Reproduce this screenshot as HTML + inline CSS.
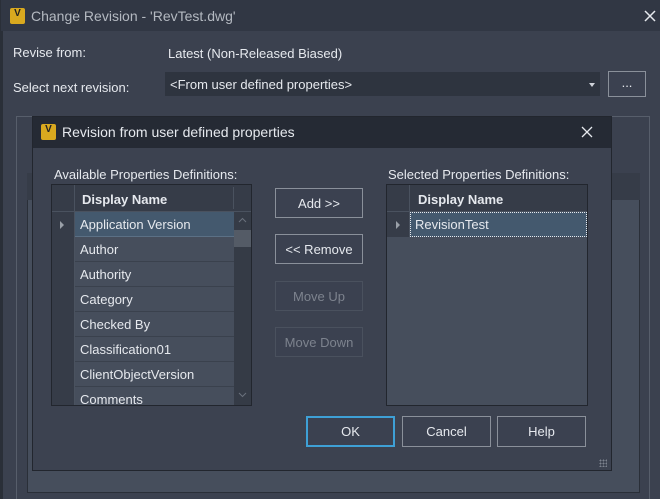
<!DOCTYPE html>
<html><head><style>
*{margin:0;padding:0;box-sizing:border-box}
body{width:660px;height:499px;overflow:hidden;background:#3b414f;font-family:"Liberation Sans",sans-serif;font-size:13px;color:#e6e9ee;position:relative}
.a{position:absolute}
.btn{position:absolute;border:1px solid #8a909a;text-align:center;color:#e6e9ee;background:#3b4150}
.dis{border-color:#4a515e;color:#7d838e}
.row{position:absolute;left:23px;width:159px;height:25px;border-bottom:1px solid #3a414d;padding-left:5px;line-height:25px;background:#464e5c}
.icon{position:absolute;width:15px;height:16px;background:#d9a91f;border-radius:2px;color:#222;font-weight:bold;font-size:10px;text-align:center;line-height:11px}
</style></head><body>
<div class="a" style="left:0;top:0;width:3px;height:499px;background:#2a2f38"></div>
<div class="a" style="left:1px;top:0;width:659px;height:31px;background:#313744"></div>
<div class="icon" style="left:10px;top:8px">V</div>
<div class="a" style="left:31px;top:8px;font-size:14px;color:#b4b9c1">Change Revision - 'RevTest.dwg'</div>
<svg class="a" style="left:644px;top:10px" width="12" height="12"><path d="M1 1L11 11M11 1L1 11" stroke="#e6e9ee" stroke-width="1.5"/></svg>
<div class="a" style="left:13px;top:45px">Revise from:</div>
<div class="a" style="left:168px;top:46px">Latest (Non-Released Biased)</div>
<div class="a" style="left:13px;top:80px">Select next revision:</div>
<div class="a" style="left:165px;top:72px;width:435px;height:24px;background:#2e343f;padding-left:5px;line-height:25px">&lt;From user defined properties&gt;</div>
<div class="a" style="left:589px;top:83px;border:3px solid transparent;border-top:4px solid #cfd3d9"></div>
<div class="btn" style="left:608px;top:71px;width:38px;height:26px;line-height:22px">...</div>
<div class="a" style="left:16px;top:116px;width:634px;height:383px;border:1px solid #575e6b;border-bottom:none;background:#3b414f"></div>
<div class="a" style="left:27px;top:173px;width:613px;height:320px;border:1px solid #2a2f38;background:#464e5c"></div>
<div class="a" style="left:27px;top:173px;width:613px;height:27px;background:#363c48"></div>
<div class="a" style="left:32px;top:116px;width:580px;height:355px;border:1px solid #22262e;background:#3c4250">
 <div class="a" style="left:0;top:0;width:578px;height:31px;background:#252a34"></div>
 <div class="icon" style="left:8px;top:7px">V</div>
 <div class="a" style="left:29px;top:7px;font-size:14px">Revision from user defined properties</div>
 <svg class="a" style="left:548px;top:9px" width="12" height="12"><path d="M1 1L11 11M11 1L1 11" stroke="#e6e9ee" stroke-width="1.3"/></svg>
 <div class="a" style="left:21px;top:50px">Available Properties Definitions:</div>
 <div class="a" style="left:355px;top:50px">Selected Properties Definitions:</div>
 <div class="a" style="left:18px;top:67px;width:201px;height:222px;border:1px solid #22262e;background:#363c48;overflow:hidden">
  <div class="a" style="left:0;top:0;width:199px;height:27px;border-bottom:1px solid #4a525f"></div>
  <div class="a" style="left:22px;top:0;width:1px;height:220px;background:#4a525f"></div>
  <div class="a" style="left:181px;top:2px;width:1px;height:22px;background:#4a525f"></div>
  <div class="a" style="left:30px;top:7px;font-weight:bold">Display Name</div>
  <div class="a" style="left:8px;top:36px;border:4px solid transparent;border-left:4px solid #9aa0a8;border-right:none"></div>
  <div class="row" style="top:27px;background:#44596e;border-bottom:1px solid #5b7085">Application Version</div>
  <div class="row" style="top:52px">Author</div>
  <div class="row" style="top:77px">Authority</div>
  <div class="row" style="top:102px">Category</div>
  <div class="row" style="top:127px">Checked By</div>
  <div class="row" style="top:152px">Classification01</div>
  <div class="row" style="top:177px">ClientObjectVersion</div>
  <div class="row" style="top:202px">Comments</div>
  <div class="a" style="left:182px;top:27px;width:17px;height:193px;background:#353b46"></div>
  <div class="a" style="left:182px;top:45px;width:17px;height:17px;background:#545b66"></div>
  <svg class="a" style="left:186px;top:32px" width="9" height="6"><path d="M1 5L4.5 1.5L8 5" stroke="#6a717c" fill="none"/></svg>
  <svg class="a" style="left:186px;top:207px" width="9" height="6"><path d="M1 1L4.5 4.5L8 1" stroke="#6a717c" fill="none"/></svg>
 </div>
 <div class="a" style="left:353px;top:67px;width:202px;height:222px;border:1px solid #22262e;background:#464e5c">
  <div class="a" style="left:0;top:0;width:200px;height:27px;background:#363c48;border-bottom:1px solid #4a525f"></div>
  <div class="a" style="left:0;top:27px;width:23px;height:25px;background:#363c48"></div>
  <div class="a" style="left:22px;top:0;width:1px;height:52px;background:#4a525f"></div>
  <div class="a" style="left:31px;top:7px;font-weight:bold">Display Name</div>
  <div class="a" style="left:9px;top:36px;border:4px solid transparent;border-left:4px solid #9aa0a8;border-right:none"></div>
  <div class="a" style="left:23px;top:27px;width:177px;height:25px;background:#44596e;border:1px dotted #e6e9ee;padding-left:4px;line-height:23px">RevisionTest</div>
 </div>
 <div class="btn" style="left:242px;top:71px;width:88px;height:30px;line-height:29px">Add &gt;&gt;</div>
 <div class="btn" style="left:242px;top:117px;width:88px;height:30px;line-height:29px">&lt;&lt; Remove</div>
 <div class="btn dis" style="left:242px;top:164px;width:88px;height:30px;line-height:29px">Move Up</div>
 <div class="btn dis" style="left:242px;top:210px;width:88px;height:30px;line-height:29px">Move Down</div>
 <div class="btn" style="left:273px;top:299px;width:89px;height:31px;line-height:28px;border:2px solid #3ea0d6">OK</div>
 <div class="btn" style="left:369px;top:299px;width:89px;height:31px;line-height:30px">Cancel</div>
 <div class="btn" style="left:464px;top:299px;width:89px;height:31px;line-height:30px">Help</div>
 <div class="a" style="left:566px;top:342px;width:8px;height:8px;background:radial-gradient(circle,#7d838e 0.8px,transparent 1px) 0 0/3px 3px"></div>
</div>
</body></html>
